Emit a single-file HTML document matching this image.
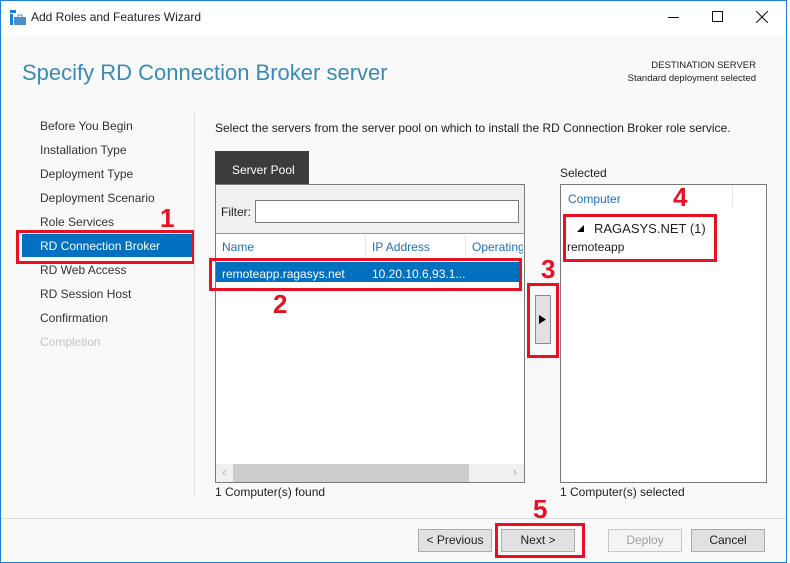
<!DOCTYPE html>
<html><head><style>
*{margin:0;padding:0;box-sizing:border-box}
body{width:790px;height:563px;position:relative;background:#fff;font-family:"Segoe UI","Liberation Sans",sans-serif;font-size:12px;color:#1e1e1e;overflow:hidden}
.a{position:absolute;white-space:nowrap}
.red{position:absolute;border:3px solid #e81123}
.num{position:absolute;color:#e81123;font-weight:bold;font-size:26px;line-height:26px}
.btn{position:absolute;height:23px;width:74px;background:#e1e1e1;border:1px solid #adadad;text-align:center;line-height:21px;font-size:12px}
.nav{position:absolute;left:40px;font-size:12px;color:#333}
</style></head><body>
<div class="a" style="left:0;top:0;width:787px;height:563px;border:1px solid #1a82d6;background:#f9f9f9"></div>
<div class="a" style="left:1px;top:1px;width:785px;height:35px;background:#fff"></div>
<svg class="a" style="left:10px;top:10px" width="18" height="16"><rect x="0" y="0" width="6" height="3" fill="#1a82d6"/><rect x="0" y="4" width="3" height="11" fill="#1a82d6"/><rect x="4" y="7" width="12" height="8" fill="#4a8fc8"/><rect x="8" y="5" width="4" height="3" fill="none" stroke="#4a8fc8"/></svg>
<div class="a" style="left:31px;top:10px;font-size:12px">Add Roles and Features Wizard</div>
<div class="a" style="left:668px;top:17px;width:11px;height:1px;background:#111"></div>
<div class="a" style="left:712px;top:11px;width:11px;height:11px;border:1px solid #111"></div>
<svg class="a" style="left:756px;top:11px" width="12" height="12"><path d="M0 0L12 12M12 0L0 12" stroke="#111" stroke-width="1"/></svg>
<div class="a" style="left:22px;top:60px;font-size:22px;color:#3a8ab8;font-weight:300">Specify RD Connection Broker server</div>
<div class="a" style="left:600px;top:59px;width:156px;text-align:right;font-size:9.5px;line-height:13px">DESTINATION SERVER<br>Standard deployment selected</div>

<div class="nav" style="top:119px">Before You Begin</div>
<div class="nav" style="top:143px">Installation Type</div>
<div class="nav" style="top:167px">Deployment Type</div>
<div class="nav" style="top:191px">Deployment Scenario</div>
<div class="nav" style="top:215px">Role Services</div>
<div class="a" style="left:22px;top:234px;width:170px;height:23px;background:#0070bf"></div>
<div class="nav" style="top:239px;color:#fff">RD Connection Broker</div>
<div class="nav" style="top:263px">RD Web Access</div>
<div class="nav" style="top:287px">RD Session Host</div>
<div class="nav" style="top:311px">Confirmation</div>
<div class="nav" style="top:335px;color:#c4c4c4">Completion</div>
<div class="red" style="left:16px;top:230px;width:179px;height:34px"></div>
<div class="num" style="left:160px;top:205px">1</div>
<div class="a" style="left:194px;top:112px;width:1px;height:384px;background:#ddd"></div>

<div class="a" style="left:215px;top:121px">Select the servers from the server pool on which to install the RD Connection Broker role service.</div>
<div class="a" style="left:215px;top:151px;width:94px;height:33px;background:#3c3c3c;color:#fff;padding:12px 0 0 17px">Server Pool</div>
<div class="a" style="left:215px;top:184px;width:310px;height:299px;border:1px solid #7a7a7a;background:#fff"></div>
<div class="a" style="left:216px;top:185px;width:308px;height:49px;background:#f0f0f0;border-bottom:1px solid #999"></div>
<div class="a" style="left:221px;top:205px">Filter:</div>
<div class="a" style="left:255px;top:200px;width:264px;height:23px;border:1px solid #7a7a7a;background:#fff"></div>
<div class="a" style="left:222px;top:240px;color:#1e6fb8">Name</div>
<div class="a" style="left:372px;top:240px;color:#1e6fb8">IP Address</div>
<div class="a" style="left:472px;top:240px;color:#1e6fb8;width:51px;overflow:hidden">Operating</div>
<div class="a" style="left:365px;top:235px;width:1px;height:22px;background:#e5e5e5"></div>
<div class="a" style="left:465px;top:235px;width:1px;height:22px;background:#e5e5e5"></div>
<div class="a" style="left:216px;top:262px;width:306px;height:20px;background:#0070bf"></div>
<div class="a" style="left:222px;top:267px;color:#fff">remoteapp.ragasys.net</div>
<div class="a" style="left:372px;top:267px;color:#fff">10.20.10.6,93.1...</div>
<div class="red" style="left:209px;top:258px;width:313px;height:33px"></div>
<div class="num" style="left:273px;top:291px">2</div>
<div class="a" style="left:216px;top:464px;width:308px;height:18px;background:#f0f0f0"></div>
<div class="a" style="left:233px;top:464px;width:236px;height:18px;background:#cdcdcd"></div>
<div class="a" style="left:222px;top:465px;color:#aaa">‹</div>
<div class="a" style="left:513px;top:465px;color:#aaa">›</div>
<div class="a" style="left:215px;top:485px">1 Computer(s) found</div>

<div class="a" style="left:535px;top:295px;width:16px;height:49px;background:#e1e1e1;border:1px solid #8a8a8a"></div>
<svg class="a" style="left:539px;top:315px" width="8" height="9"><path d="M0 0L7 4.5L0 9Z" fill="#000"/></svg>
<div class="red" style="left:527px;top:283px;width:32px;height:75px"></div>
<div class="num" style="left:541px;top:256px">3</div>

<div class="a" style="left:560px;top:166px">Selected</div>
<div class="a" style="left:560px;top:184px;width:207px;height:299px;border:1px solid #7a7a7a;background:#fff"></div>
<div class="a" style="left:568px;top:192px;color:#1e6fb8">Computer</div>
<div class="a" style="left:732px;top:185px;width:1px;height:22px;background:#e5e5e5"></div>
<svg class="a" style="left:577px;top:225px" width="8" height="7"><path d="M7 0L7 7L0 7Z" fill="#000"/></svg>
<div class="a" style="left:594px;top:221px;font-size:13px">RAGASYS.NET (1)</div>
<div class="a" style="left:567px;top:240px">remoteapp</div>
<div class="red" style="left:563px;top:214px;width:154px;height:48px"></div>
<div class="num" style="left:673px;top:184px">4</div>
<div class="a" style="left:560px;top:485px">1 Computer(s) selected</div>

<div class="a" style="left:1px;top:518px;width:785px;height:1px;background:#dcdcdc"></div>
<div class="btn" style="left:418px;top:529px">&lt; Previous</div>
<div class="btn" style="left:501px;top:529px">Next &gt;</div>
<div class="btn" style="left:608px;top:529px;background:#f4f4f4;border-color:#c8c8c8;color:#a0a0a0">Deploy</div>
<div class="btn" style="left:691px;top:529px">Cancel</div>
<div class="red" style="left:495px;top:523px;width:90px;height:35px"></div>
<div class="num" style="left:533px;top:496px">5</div>
</body></html>
